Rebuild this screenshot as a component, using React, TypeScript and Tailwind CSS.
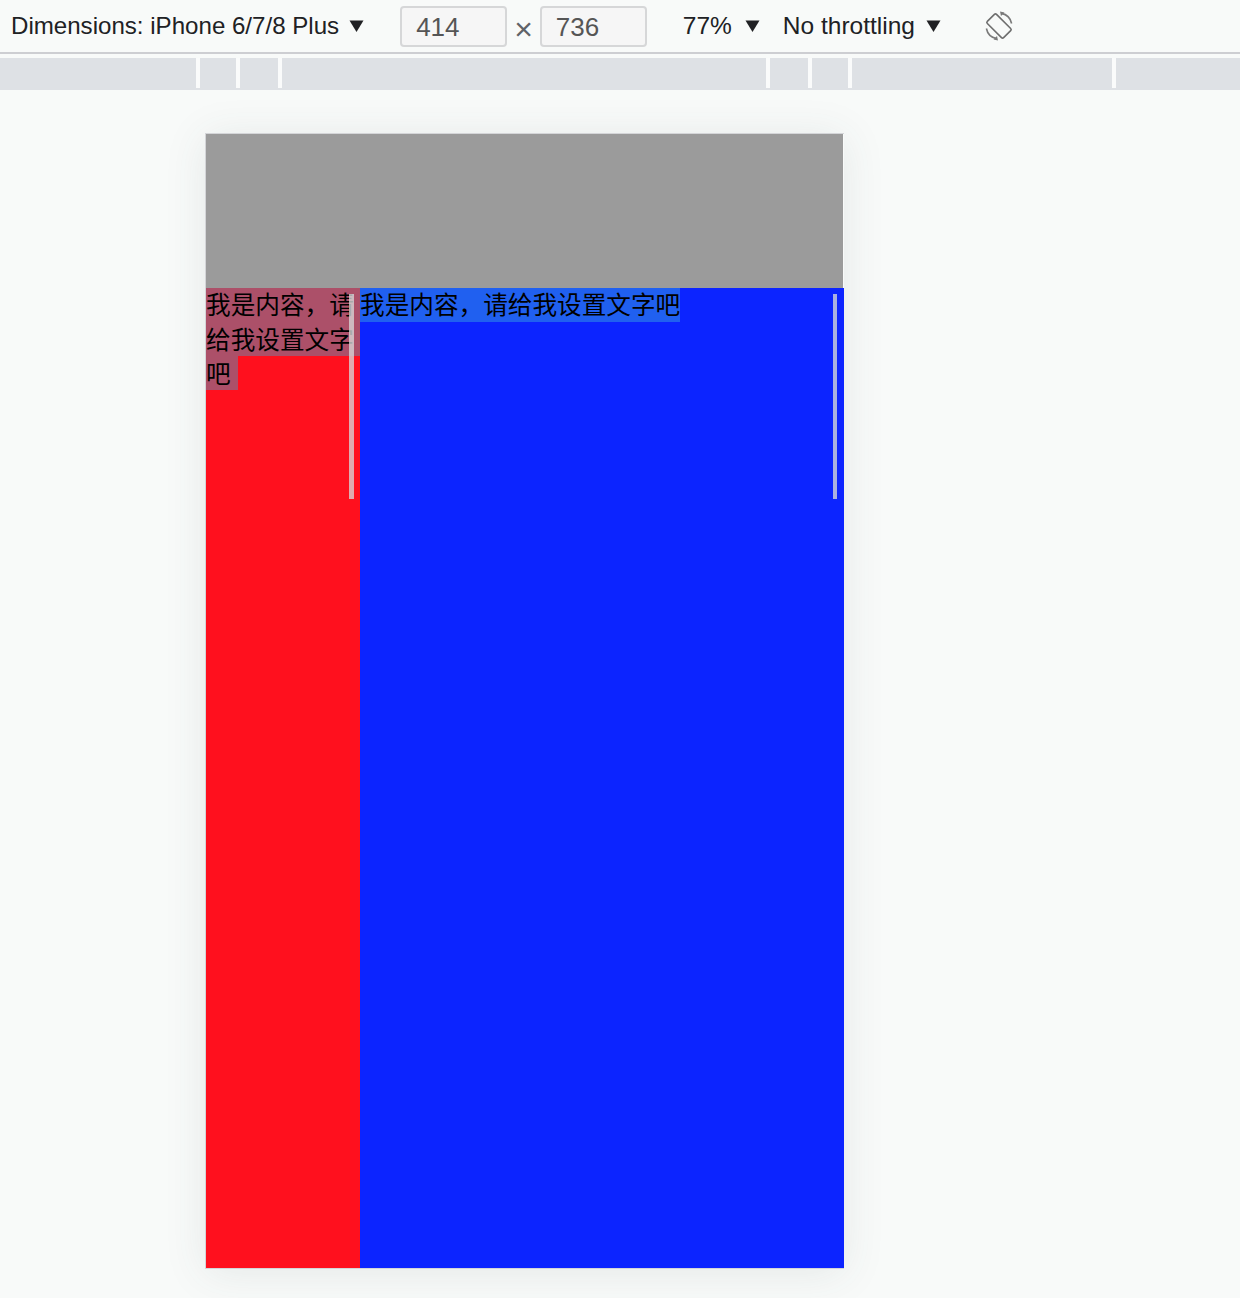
import React from "react";

const cjk = "font-['Liberation_Sans','Noto_Sans_CJK_SC',sans-serif]";

function Caret() {
  return (
    <svg width="15" height="12" viewBox="0 0 15 12" className="shrink-0">
      <polygon points="0.5,0.5 14.5,0.5 7.5,12" fill="#202124" />
    </svg>
  );
}

function RotateIcon() {
  return (
    <svg width="30" height="30" viewBox="0 0 30 30" fill="none" className="shrink-0">
      <rect x="8.5" y="3.5" width="13" height="23" rx="1.5" transform="rotate(-45 15 15)" stroke="#6e6e6e" strokeWidth="1.6" />
      <path d="M17.5 2.4 A13 13 0 0 1 27.6 12.5" stroke="#7a7a7a" strokeWidth="1.6" />
      <path d="M12.5 27.6 A13 13 0 0 1 2.4 17.5" stroke="#7a7a7a" strokeWidth="1.6" />
      <polygon points="16,0.5 20.5,1.5 17,5" fill="#7a7a7a" />
      <polygon points="14,29.5 9.5,28.5 13,25" fill="#7a7a7a" />
    </svg>
  );
}

function NumBox({ value, className }: { value: string; className: string }) {
  return (
    <div className={`h-[41px] w-[107px] shrink-0 rounded-[4px] border-2 border-[#d6d7d8] bg-[#f6f6f6] pl-[14px] text-[26px] leading-[38px] text-[#555555] ${className}`}>
      {value}
    </div>
  );
}

const ticks = [196, 36, 38, 484, 38, 36, 260];

export default function App() {
  return (
    <div className={`h-[1298px] w-[1240px] overflow-hidden bg-[#f8faf9] ${cjk}`}>
      <div className="flex h-[54px] items-center border-b-2 border-[#cdced2] text-[24.5px] leading-none text-[#202124]">
        <span className="ml-[11px] whitespace-nowrap text-[24.1px]">Dimensions: iPhone 6/7/8 Plus</span>
        <span className="ml-[10px]"><Caret /></span>
        <NumBox value="414" className="ml-[36px]" />
        <span className="ml-[7px] mr-[7px] mt-[6px] text-[32px] text-[#5f6368]">×</span>
        <NumBox value="736" className="" />
        <span className="ml-[36px]">77%</span>
        <span className="ml-[13px]"><Caret /></span>
        <span className="ml-[23px] whitespace-nowrap">No throttling</span>
        <span className="ml-[11px]"><Caret /></span>
        <span className="ml-[43px]"><RotateIcon /></span>
      </div>

      <div className="mt-[4px] flex h-[32px] items-start bg-[#dee1e5]">
        {ticks.map((w, i) => (
          <React.Fragment key={i}>
            <div className="h-[30px] shrink-0" style={{ width: w }} />
            <div className="h-[30px] w-[4px] shrink-0 bg-[#fafbfb]" />
          </React.Fragment>
        ))}
      </div>

      <div className="relative ml-[205px] mt-[43px] flex h-[1136px] w-[639px] flex-col border-l border-t border-b border-[#d4d5d8] shadow-[0_4px_40px_rgba(60,80,80,0.10)]">
        <div className="h-[154px] shrink-0 bg-[#9b9b9b] mr-px" />
        <div className="flex flex-1 text-[24.64px] leading-[34px] text-black">
          <div className="relative w-[154px] bg-[#ff101e]">
            <div className="h-[34px] whitespace-nowrap bg-[#ac5069] pt-px">我是内容，请</div>
            <div className="h-[34px] whitespace-nowrap bg-[#ac5069] pt-[2px]">给我设置文字</div>
            <div className="h-[34px] w-[32px] whitespace-nowrap bg-[#ac5069] pt-[2px]">吧</div>
            <div className="absolute left-[143px] top-[6px] h-[205px] w-[5px] bg-[rgba(215,215,215,0.78)]" />
          </div>
          <div className="relative flex-1 bg-[#0c24ff]">
            <div className="h-[34px] w-[320px] whitespace-nowrap bg-[#2060f0] pt-px">我是内容，请给我设置文字吧</div>
            <div className="absolute left-[473px] top-[6px] h-[205px] w-[4px] bg-[rgba(215,215,215,0.78)]" />
          </div>
        </div>
      </div>
    </div>
  );
}
